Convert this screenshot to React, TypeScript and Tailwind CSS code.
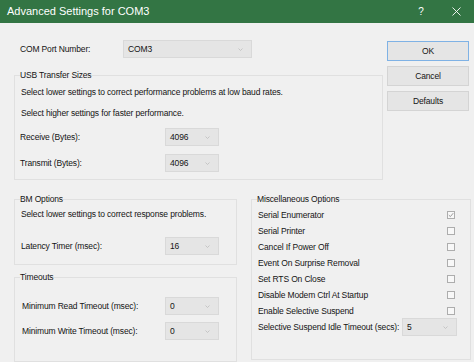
import React from 'react';

const font = { fontFamily: '"Liberation Sans", Arial, sans-serif' };

function Chevron() {
  return (
    <svg width="5" height="3" viewBox="0 0 5 3" className="shrink-0">
      <path d="M0.5 0.5 L2.5 2.5 L4.5 0.5" fill="none" stroke="#bdbdbd" strokeWidth="0.8" />
    </svg>
  );
}

function Select({ value, className }: { value: string; className: string }) {
  return (
    <div
      className={`flex h-[18px] items-center justify-between border border-[#d9d9d9] bg-[#e5e5e5] pl-[4px] pr-[8px] ${className}`}
    >
      <span>{value}</span>
      <Chevron />
    </div>
  );
}

function Group({
  title,
  className,
  children,
}: {
  title: string;
  className: string;
  children: React.ReactNode;
}) {
  return (
    <div className={`flex flex-col border border-[#e0e0e0] ${className}`}>
      <div className="-mt-[7px] ml-[5px] w-fit bg-[#f0f0f0] leading-[12px]">{title}</div>
      {children}
    </div>
  );
}

function Check({ checked }: { checked?: boolean }) {
  return (
    <span className="mr-[1px] flex h-[8px] w-[8px] items-center justify-center border border-[#adadad] bg-[#f8f8f8]">
      {checked && (
        <svg width="6" height="6" viewBox="0 0 6 6">
          <path d="M0.8 3.1 L2.4 4.6 L5.2 1.2" fill="none" stroke="#8f8f8f" strokeWidth="0.9" />
        </svg>
      )}
    </span>
  );
}

const misc = [
  { label: 'Serial Enumerator', checked: true },
  { label: 'Serial Printer' },
  { label: 'Cancel If Power Off' },
  { label: 'Event On Surprise Removal' },
  { label: 'Set RTS On Close' },
  { label: 'Disable Modem Ctrl At Startup' },
  { label: 'Enable Selective Suspend' },
];

export default function App() {
  return (
    <div
      className="h-[362px] w-[474px] overflow-hidden bg-[#f0f0f0] text-[8.5px] tracking-[-0.15px] text-[#141414]"
      style={font}
    >
      {/* title bar */}
      <div className="flex h-[23px] items-center bg-[#337544] pl-[7px] text-[11px] tracking-normal text-white">
        <span className="flex-1">Advanced Settings for COM3</span>
        <span className="w-[10px] text-center text-[10px]">?</span>
        <span className="ml-[25px] mr-[13px] flex w-[10px] justify-center">
          <svg width="9" height="9" viewBox="0 0 9 9">
            <path d="M0.5 0.5 L8.5 8.5 M8.5 0.5 L0.5 8.5" stroke="#fff" strokeWidth="0.9" />
          </svg>
        </span>
      </div>

      {/* top section */}
      <div className="flex pl-[14px]">
        <div className="flex w-[369px] flex-col">
          <div className="mt-[17px] flex h-[18px] items-center">
            <span className="w-[109px] pl-[6px]">COM Port Number:</span>
            <Select value="COM3" className="w-[129px]" />
          </div>
          <Group title="USB Transfer Sizes" className="mt-[17px] h-[105px]">
            <div className="mt-[5px] pl-[6px] leading-[12px]">
              Select lower settings to correct performance problems at low baud rates.
            </div>
            <div className="mt-[9px] pl-[6px] leading-[12px]">Select higher settings for faster performance.</div>
            <div className="mt-[9px] flex h-[18px] items-center">
              <span className="w-[150px] pl-[5px]">Receive (Bytes):</span>
              <Select value="4096" className="w-[54px]" />
            </div>
            <div className="mt-[8px] flex h-[18px] items-center">
              <span className="w-[150px] pl-[5px]">Transmit (Bytes):</span>
              <Select value="4096" className="w-[54px]" />
            </div>
          </Group>
        </div>
        <div className="ml-[4px] mt-[18px] flex w-[82px] flex-col gap-[5px]">
          <button className="h-[20px] border border-[#7fb2e5] bg-[#e5e5e5]">OK</button>
          <button className="h-[20px] border border-[#d4d4d4] bg-[#e5e5e5]">Cancel</button>
          <button className="h-[20px] border border-[#d4d4d4] bg-[#e5e5e5]">Defaults</button>
        </div>
      </div>

      {/* bottom section */}
      <div className="mt-[19px] flex pl-[14px]">
        <div className="flex w-[223px] flex-col">
          <Group title="BM Options" className="h-[66px]">
            <div className="mt-[3px] pl-[6px] leading-[12px]">Select lower settings to correct response problems.</div>
            <div className="mt-[17px] flex h-[18px] items-center">
              <span className="w-[150px] pl-[6px]">Latency Timer (msec):</span>
              <Select value="16" className="w-[54px]" />
            </div>
          </Group>
          <Group title="Timeouts" className="mt-[12px] h-[85px]">
            <div className="mt-[14px] flex h-[18px] items-center">
              <span className="w-[150px] pl-[7px]">Minimum Read Timeout (msec):</span>
              <Select value="0" className="w-[54px]" />
            </div>
            <div className="mt-[7px] flex h-[18px] items-center">
              <span className="w-[150px] pl-[7px]">Minimum Write Timeout (msec):</span>
              <Select value="0" className="w-[54px]" />
            </div>
          </Group>
        </div>
        <Group title="Miscellaneous Options" className="ml-[14px] h-[161px] w-[220px]">
          <div className="mt-[2px] flex flex-col">
            {misc.map((m) => (
              <div key={m.label} className="flex h-[16px] items-center justify-between pl-[6px] pr-[14px]">
                <span>{m.label}</span>
                <Check checked={m.checked} />
              </div>
            ))}
            <div className="flex h-[16px] items-center justify-between pl-[6px] pr-[13px]">
              <span>Selective Suspend Idle Timeout (secs):</span>
              <Select value="5" className="w-[55px]" />
            </div>
          </div>
        </Group>
      </div>
    </div>
  );
}
